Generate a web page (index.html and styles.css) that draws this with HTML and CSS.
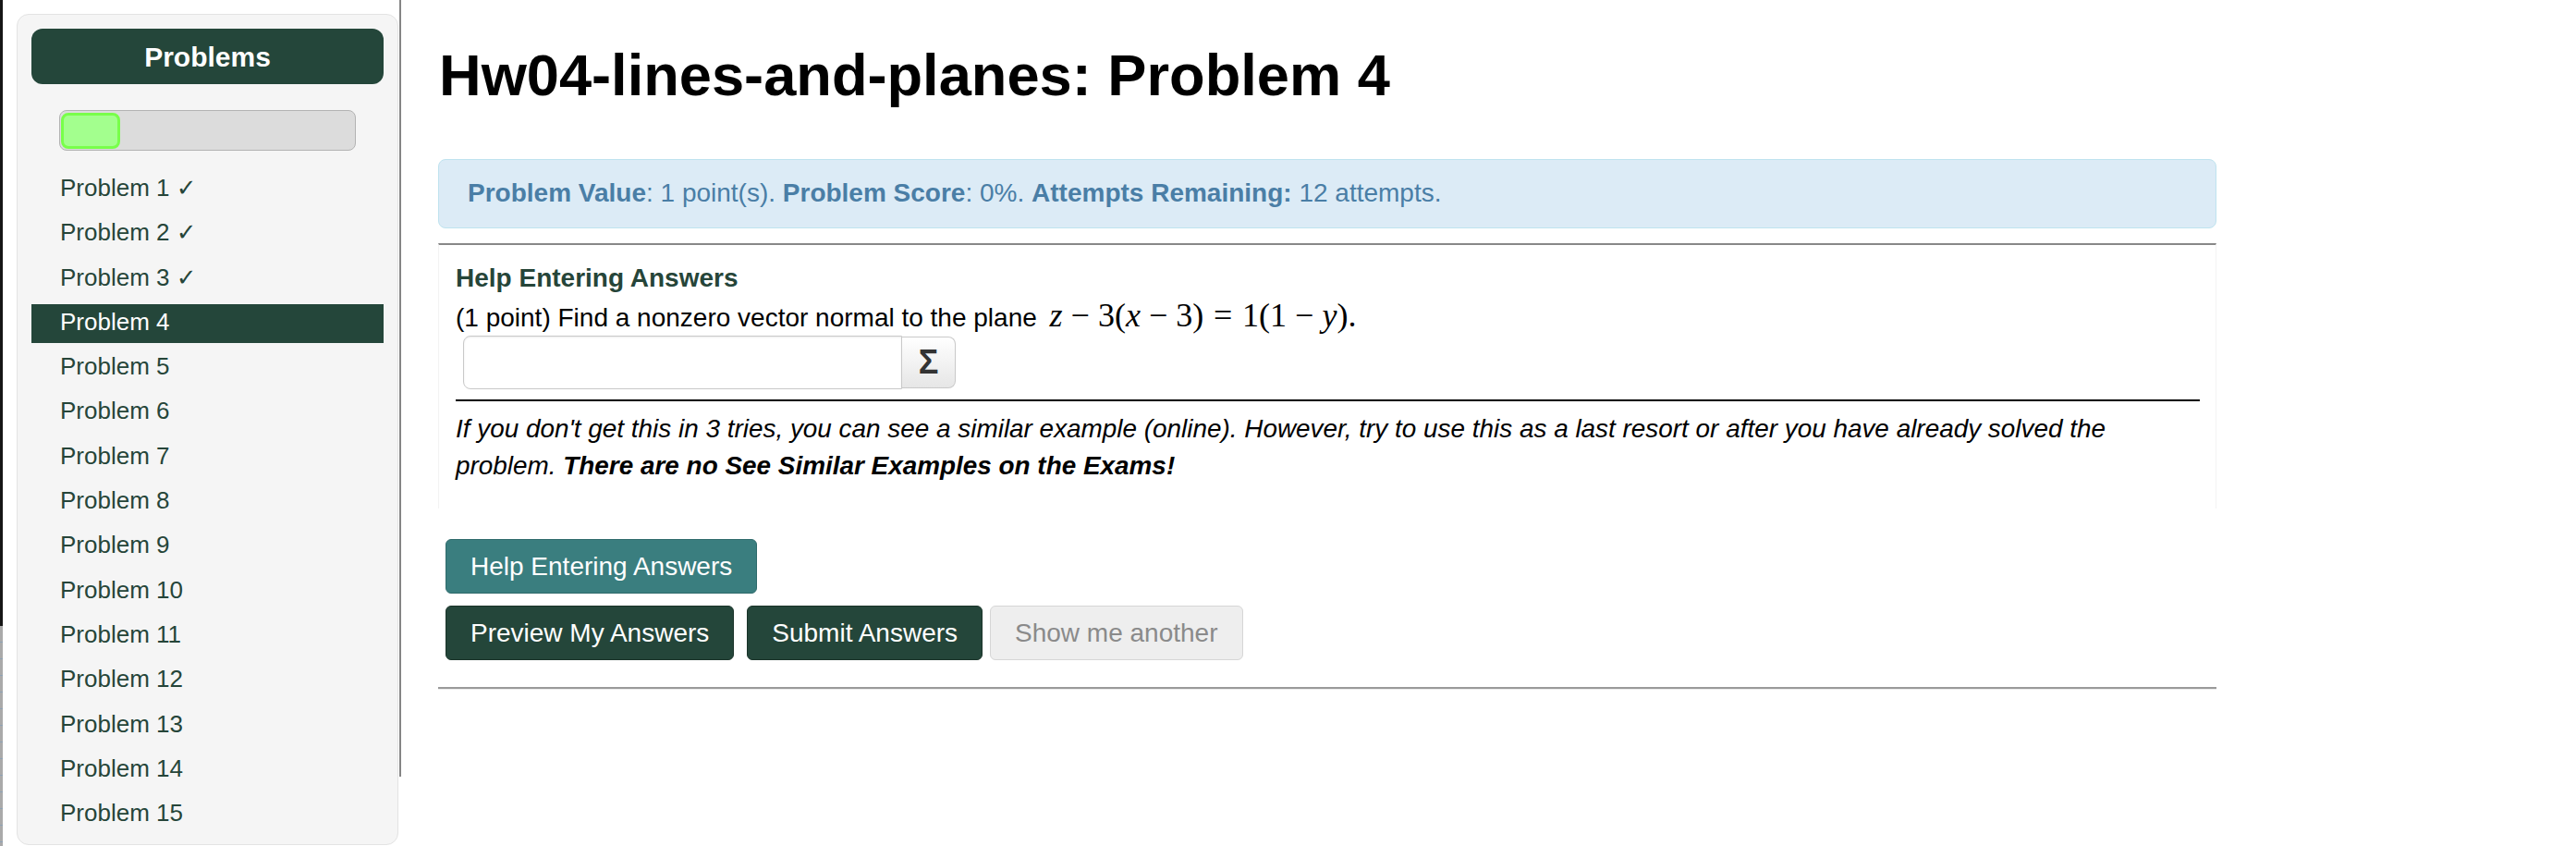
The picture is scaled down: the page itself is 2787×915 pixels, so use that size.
FILE: index.html
```html
<!DOCTYPE html>
<html lang="en">
<head>
<meta charset="utf-8">
<title>Hw04-lines-and-planes: Problem 4</title>
<link rel="stylesheet" href="styles.css">
</head>
<body>
<div class="edge"><div class="edge-top"></div><div class="edge-bottom"></div></div>
<aside class="sidebar">
  <div class="panel">
    <div class="panel-head">Problems</div>
    <div class="progress"><div class="progress-fill"></div></div>
    <ul class="plist">
      <li><a class="pitem">Problem 1 <span class="chk">✓</span></a></li>
      <li><a class="pitem">Problem 2 <span class="chk">✓</span></a></li>
      <li><a class="pitem">Problem 3 <span class="chk">✓</span></a></li>
      <li><a class="pitem active">Problem 4</a></li>
      <li><a class="pitem">Problem 5</a></li>
      <li><a class="pitem">Problem 6</a></li>
      <li><a class="pitem">Problem 7</a></li>
      <li><a class="pitem">Problem 8</a></li>
      <li><a class="pitem">Problem 9</a></li>
      <li><a class="pitem">Problem 10</a></li>
      <li><a class="pitem">Problem 11</a></li>
      <li><a class="pitem">Problem 12</a></li>
      <li><a class="pitem">Problem 13</a></li>
      <li><a class="pitem">Problem 14</a></li>
      <li><a class="pitem">Problem 15</a></li>
    </ul>
  </div>
</aside>
<main class="main">
  <h1 class="title">Hw04-lines-and-planes: Problem 4</h1>
  <div class="info"><b>Problem Value</b>: 1 point(s). <b>Problem Score</b>: 0%. <b>Attempts Remaining:</b> 12 attempts.</div>
  <div class="problem">
    <div class="help-head">Help Entering Answers</div>
    <div class="ptext">(1 point) Find a nonzero vector normal to the plane <span class="math"><i>z</i><span class="op">−</span>3(<i>x</i><span class="op">−</span>3)<span class="rel">=</span>1(1<span class="op">−</span><i>y</i>).</span></div>
    <div class="answer"><div class="ans-input"></div><div class="sigma">Σ</div></div>
    <div class="rule"></div>
    <p class="note">If you don't get this in 3 tries, you can see a similar example (online). However, try to use this as a last resort or after you have already solved the problem. <b>There are no See Similar Examples on the Exams!</b></p>
  </div>
  <div class="btnrow"><span class="btn btn-help">Help Entering Answers</span></div>
  <div class="btnrow btnrow2">
    <span class="btn btn-dark">Preview My Answers</span>
    <span class="btn btn-dark">Submit Answers</span>
    <span class="btn btn-off">Show me another</span>
  </div>
  <div class="bottom-rule"></div>
</main>
</body>
</html>
```

FILE: styles.css
```css
* { box-sizing: border-box; }
html, body { margin: 0; padding: 0; background: #fff; }
body {
  display: flex;
  align-items: flex-start;
  font-family: "Liberation Sans", Arial, Helvetica, sans-serif;
  font-size: 28px;
  line-height: 40px;
  color: #000;
  height: 915px;
  overflow: hidden;
}
.edge { width: 3px; flex: none; display: flex; flex-direction: column; height: 915px; }
.edge-top { height: 677px; background: #161616; }
.edge-bottom { flex: 1; background: repeating-linear-gradient(to bottom, #aaaaaa 0 17px, #8ea2b6 17px 18px); }
.sidebar {
  width: 431px;
  flex: none;
  height: 840px;
  border-right: 2px solid #858585;
  padding-left: 15px;
  padding-top: 15px;
}
.panel {
  width: 413px;
  background: #f5f5f5;
  border: 1px solid #e3e3e3;
  border-radius: 13px;
  padding: 15px 15px 11px 15px;
  font-size: 26px;
}
.panel-head {
  height: 60px;
  background: #24463a;
  color: #fff;
  border-radius: 12px;
  font-weight: bold;
  font-size: 30px;
  line-height: 62px;
  text-align: center;
}
.progress {
  margin: 28px 30px 0 30px;
  height: 44px;
  background: #dcdcdc;
  border: 1px solid #b3b3b3;
  border-radius: 8px;
  padding: 2px 1px;
}
.progress-fill {
  width: 64px;
  height: 39px;
  background: #a3ff8e;
  border: 3px solid #78ff4a;
  border-radius: 8px;
}
.plist {
  list-style: none;
  margin: 21px 0 0 0;
  padding: 0;
  display: flex;
  flex-direction: column;
  gap: 6.3px;
}
.pitem {
  display: block;
  height: 42px;
  line-height: 38px;
  padding-left: 31px;
  color: #264539;
}
.pitem.active { background: #24463a; color: #fff; }
.chk { font-family: "DejaVu Sans", sans-serif; font-size: 26px; }
.main {
  margin-left: 40px;
  width: 1924px;
  flex: none;
}
.title {
  margin: 46px 0 0 1px;
  font-size: 63.2px;
  line-height: 70px;
  font-weight: bold;
}
.info {
  margin-top: 56px;
  height: 75px;
  background: #dcebf6;
  border: 1px solid #bfe3ef;
  border-radius: 8px;
  padding: 16px 31px 17px 31px;
  color: #4a7ea6;
}
.info b { font-weight: bold; }
.problem {
  margin-top: 16px;
  border-top: 2px solid #888;
  border-left: 1px solid #f3f3f3;
  border-right: 1px solid #f3f3f3;
  padding: 16px 17px 27px 18px;
  height: 287px;
}
.help-head { font-weight: bold; color: #264539; }
.ptext { margin-top: 2px; }
.math {
  font-family: "Liberation Serif", "Times New Roman", serif;
  font-size: 36px;
  line-height: 1;
  margin-left: 6px;
}
.math i { font-style: italic; }
.op { margin: 0 0.25em; }
.rel { margin: 0 0.3em; }
.answer { display: flex; margin-left: 8px; height: 58px; margin-top: -1px; }
.ans-input {
  width: 475px;
  height: 58px;
  border: 1px solid #c9c9c9;
  border-radius: 8px 0 0 8px;
  box-shadow: inset 0 1px 2px rgba(0,0,0,0.08);
  background: #fff;
}
.sigma {
  width: 58px;
  height: 56px;
  margin-top: 1px;
  border: 1px solid #c9c9c9;
  border-left: none;
  border-radius: 0 8px 8px 0;
  background: linear-gradient(#ffffff, #e6e6e6);
  color: #333;
  font-weight: bold;
  font-size: 36px;
  line-height: 54px;
  text-align: center;
}
.rule { margin-top: 11px; border-top: 2px solid #000; }
.note { margin: 10px 0 0 0; font-style: italic; font-size: 27.9px; }
.btnrow { display: flex; gap: 14px; margin-left: 8px; margin-top: 33px; }
.btnrow2 { margin-top: 13px; }
.btn {
  display: inline-block;
  height: 59px;
  padding: 8px 26px;
  line-height: 41px;
  border-radius: 6px;
  border: 1px solid transparent;
  color: #fff;
  white-space: nowrap;
}
.btn-help { background: #3a7e7f; border-color: #2e6a6b; }
.btn-dark { background: #24463a; border-color: #1a3329; }
.btn-off { background: #eeeeee; border-color: #d6d6d6; color: #8a8a8a; margin-left: -6px; }
.bottom-rule {
  margin-top: 29px;
  border-top: 2px solid #9a9a9a;
  border-bottom: 1px solid #ececec;
}
```
